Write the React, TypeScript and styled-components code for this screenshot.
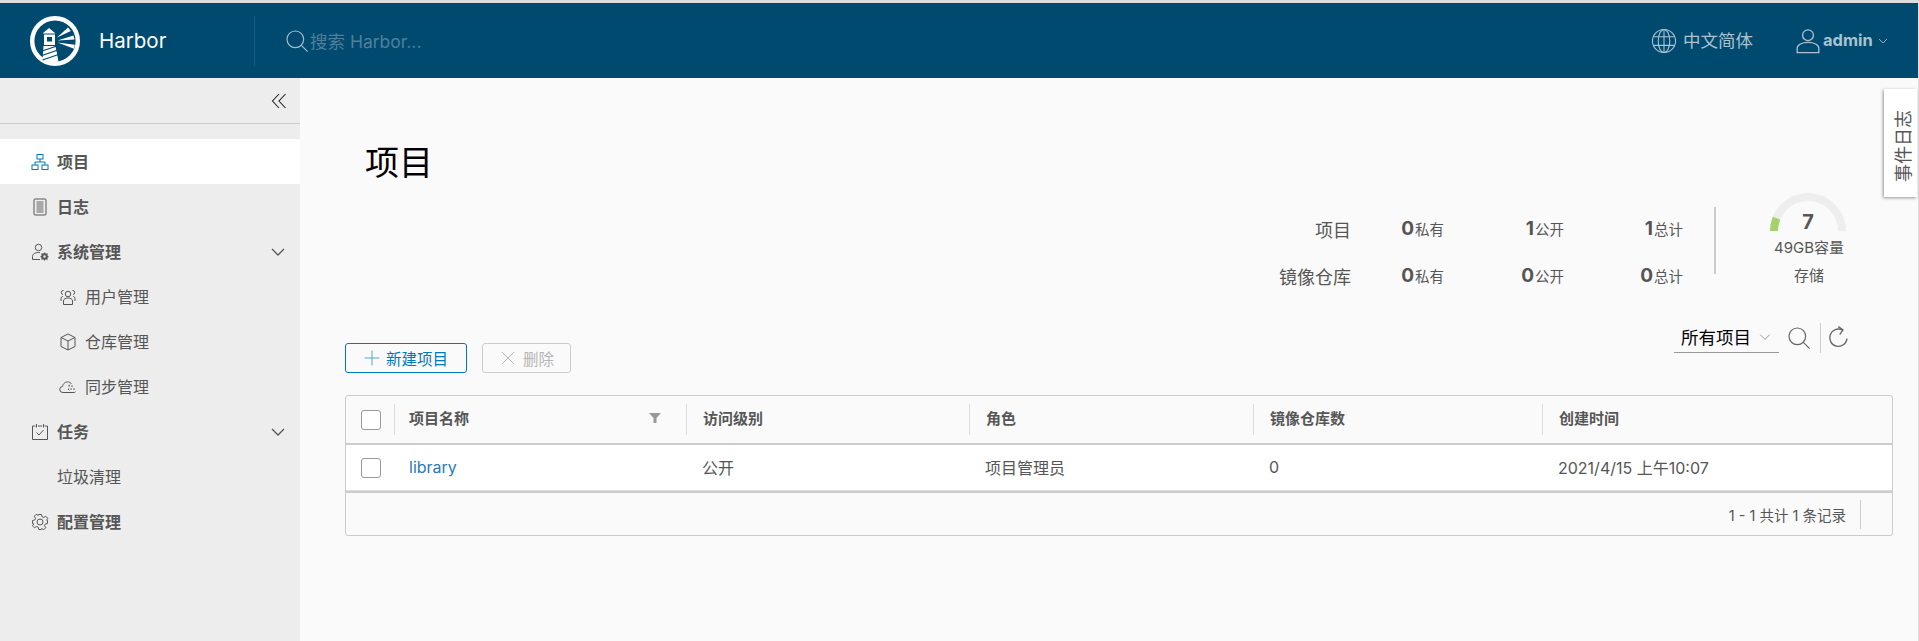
import { FC, ReactNode } from 'react';
import styled, { createGlobalStyle } from 'styled-components';

const FONT = `Inter, "Noto Sans CJK SC", sans-serif`;
const HEADER_BG = '#004a70';
const TEXT = '#565656';
const BLUE = '#0079b8';
const LINE = '#ccc';

const GlobalStyle = createGlobalStyle`
  html, body { margin: 0; padding: 0; height: 100%; overflow: hidden; }
  body { font-family: ${FONT}; color: ${TEXT}; background: #fafafa; }
  #root { height: 100%; }
  * { box-sizing: border-box; }
`;

const Page = styled.div`
  position: relative;
  height: 641px;
  display: flex;
  flex-direction: column;
  border-top: 3px solid #ddd;
  border-right: 1px solid #ddd;
`;

const Header = styled.header`
  height: 75px;
  flex: none;
  display: flex;
  align-items: center;
  background: ${HEADER_BG};
  color: #a9c3d2;
`;

const Branding = styled.div`
  width: 255px;
  height: 50px;
  padding-left: 30px;
  display: flex;
  align-items: center;
  gap: 19px;
  border-right: 1px solid #1a5c7e;
`;

const BrandName = styled.span`
  padding-bottom: 1px;
  font-size: 20.5px;
  color: #fff;
`;

const SearchBox = styled.div`
  margin-left: 30px;
  display: flex;
  align-items: center;
  gap: 1px;
  font-size: 17.5px;
  color: #4f7f9b;
`;

const SearchGlass = styled.span`
  display: flex;
  color: #9dbccd;
`;

const HeaderRight = styled.div`
  margin-left: auto;
  display: flex;
  align-items: center;
`;

const HeaderItem = styled.div<{ $width: number; $gap: number }>`
  width: ${(p) => p.$width}px;
  display: flex;
  align-items: center;
  gap: ${(p) => p.$gap}px;
  font-size: 17.5px;
`;

const HeaderLabel = styled.span`
  padding-bottom: 3px;
`;

const UserName = styled.span`
  padding-bottom: 2px;
  font-size: 16.5px;
  font-weight: 700;
`;

const UserCaret = styled.span`
  margin-left: 2px;
  display: flex;
`;

const Body = styled.div`
  flex: 1;
  display: flex;
  min-height: 0;
`;

const SideNav = styled.nav`
  width: 300px;
  flex: none;
  background: #ededed;
`;

const NavToggle = styled.div`
  height: 46px;
  margin-bottom: 15px;
  padding-right: 12px;
  display: flex;
  align-items: center;
  justify-content: flex-end;
  color: #222;
  border-bottom: 1px solid ${LINE};
`;

const NavRow = styled.div<{ $active?: boolean; $sub?: boolean; $indent?: boolean }>`
  height: 45px;
  padding-left: ${(p) => (p.$sub ? 59 : p.$indent ? 57 : 31)}px;
  padding-right: 13px;
  display: flex;
  align-items: center;
  gap: 8px;
  font-size: 16px;
  font-weight: ${(p) => (p.$sub || p.$indent ? 400 : 700)};
  background: ${(p) => (p.$active ? '#fff' : 'transparent')};
  color: ${TEXT};
`;

const NavLabel = styled.span`
  padding-bottom: 2px;
`;

const NavCaret = styled.span`
  margin-left: auto;
  display: flex;
`;

const Main = styled.main`
  flex: 1;
  min-width: 0;
  padding: 0 25px 0 45px;
  background: #fafafa;
`;

const Title = styled.h1`
  margin: 61px 0 0 20px;
  font-size: 34px;
  line-height: 48px;
  font-weight: 400;
  color: #000;
`;

const Summary = styled.section`
  margin-top: 6px;
  height: 108px;
  padding-right: 45px;
  display: flex;
  justify-content: flex-end;
  align-items: flex-start;
`;

const StatGrid = styled.div`
  margin-top: 12px;
  display: grid;
  grid-template-columns: 72px 93px 120px 119px;
  grid-auto-rows: 47px;
  align-items: center;
  justify-items: end;
`;

const StatLabel = styled.div`
  font-size: 18px;
  white-space: nowrap;
`;

const StatCell = styled.div`
  display: flex;
  align-items: center;
  gap: 1px;
  font-size: 14.5px;
`;

const StatNumber = styled.span`
  font-size: 19px;
  font-weight: 700;
  color: #555;
`;

const StatDivider = styled.div`
  width: 2px;
  height: 67px;
  margin: 14px 52px 0 31px;
  background: ${LINE};
`;

const Gauge = styled.div`
  position: relative;
  width: 80px;
  display: flex;
  flex-direction: column;
  align-items: center;
`;

const GaugeValue = styled.div`
  position: absolute;
  top: 16px;
  left: 0;
  right: 0;
  text-align: center;
  font-size: 20px;
  line-height: 26px;
  font-weight: 700;
`;

const GaugeCaption = styled.div`
  margin: 7px 0 0 2px;
  font-size: 15px;
  line-height: 20px;
  white-space: nowrap;
`;

const GaugeTitle = styled.div`
  margin: 8px 0 0 2px;
  font-size: 15px;
  line-height: 20px;
`;

const Toolbar = styled.div`
  margin-top: 22px;
  height: 50px;
  display: flex;
  justify-content: space-between;
`;

const ButtonGroup = styled.div`
  align-self: flex-end;
  display: flex;
  gap: 15px;
`;

const ActionButton = styled.button<{ $disabled?: boolean }>`
  height: 30px;
  padding: 0 ${(p) => (p.$disabled ? 16 : 18)}px 0 ${(p) => (p.$disabled ? 16 : 17)}px;
  display: flex;
  align-items: center;
  gap: ${(p) => (p.$disabled ? 6 : 5)}px;
  font-family: ${FONT};
  font-size: 15.5px;
  border-radius: 3px;
  background: transparent;
  color: ${(p) => (p.$disabled ? '#b5b5b5' : BLUE)};
  border: 1px solid ${(p) => (p.$disabled ? LINE : BLUE)};
`;

const FilterTools = styled.div`
  height: 30px;
  margin-right: 42px;
  display: flex;
  align-items: center;
  color: #666;
`;

const FilterSelect = styled.div`
  width: 105px;
  height: 29px;
  padding: 0 7px 2px 7px;
  display: flex;
  align-items: center;
  justify-content: space-between;
  font-size: 17.5px;
  color: #000;
  border-bottom: 1px solid #999;
`;

const FilterCaret = styled.span`
  display: flex;
  color: #999;
`;

const ToolDivider = styled.div`
  width: 1px;
  height: 30px;
  margin: 0 6px 0 9px;
  background: ${LINE};
`;

const SearchTool = styled.span`
  margin-left: 8px;
  display: flex;
`;

const Table = styled.section`
  margin-top: 22px;
  border: 1px solid ${LINE};
  border-radius: 3px;
  overflow: hidden;
`;

const COLUMNS = '48px 292px 283px 284px 289px 1fr';

const HeadRow = styled.div`
  height: 49px;
  display: grid;
  grid-template-columns: ${COLUMNS};
  align-items: center;
  border-bottom: 2px solid ${LINE};
  font-size: 15px;
  font-weight: 700;
`;

const HeadCell = styled.div<{ $first?: boolean }>`
  height: 31px;
  padding: 0 25px 4px ${(p) => (p.$first ? 14 : 16)}px;
  display: flex;
  align-items: center;
  justify-content: space-between;
  border-left: 1px solid #ddd;
`;

const BodyRow = styled.div`
  height: 46px;
  display: grid;
  grid-template-columns: ${COLUMNS};
  align-items: center;
  background: #fff;
  border-bottom: 1px solid #ddd;
  font-size: 16px;
`;

const BodyCell = styled.div<{ $first?: boolean }>`
  padding: 0 0 2px ${(p) => (p.$first ? 15 : 16)}px;
`;

const CheckCell = styled.div`
  padding-left: 15px;
`;

const CheckBox = styled.div`
  width: 20px;
  height: 20px;
  border: 1px solid #999;
  border-radius: 3px;
  background: #fff;
`;

const ProjectLink = styled.a`
  color: #2a7ab8;
`;

const TableFooter = styled.div`
  height: 44px;
  padding-right: 31px;
  display: flex;
  align-items: center;
  justify-content: flex-end;
  font-size: 14.5px;
  border-top: 2px solid ${LINE};
`;

const FooterDivider = styled.div`
  width: 1px;
  height: 29px;
  margin-left: 14px;
  background: ${LINE};
`;

const EventTab = styled.div`
  position: absolute;
  top: 86px;
  right: 1px;
  width: 33px;
  height: 108px;
  padding: 5px 0 0 3px;
  display: flex;
  align-items: center;
  justify-content: center;
  background: #fff;
  box-shadow: -1px 1px 3px rgba(0, 0, 0, 0.4);
`;

const EventTabText = styled.span`
  writing-mode: vertical-rl;
  text-orientation: sideways;
  transform: rotate(180deg);
  font-size: 18px;
`;

const Svg: FC<{ size?: number; children: ReactNode; color?: string; width?: number }> = ({
  size = 18,
  children,
  color = 'currentColor',
  width = 2,
}) => (
  <svg
    width={size}
    height={size}
    viewBox="0 0 36 36"
    fill="none"
    stroke={color}
    strokeWidth={width}
    style={{ flex: 'none', display: 'block' }}
  >
    {children}
  </svg>
);

const Logo = () => (
  <svg width="50" height="50" viewBox="0 0 50 50" style={{ flex: 'none' }}>
    <circle cx="25" cy="25" r="22.8" fill="none" stroke="#fff" strokeWidth="4.4" />
    <path d="M12.5 17.5 19 12l6.500 5.500z" fill="#fff" />
    <path fillRule="evenodd" d="M14 18.500h11V29H14zM17 21v4.500h5V21z" fill="#fff" />
    <path d="M13.500 30h12l3 15.500-7 1-9-1.500z" fill="#fff" />
    <path d="M12 35l15-5M12 39.500l16-5.500M12.500 44l16-5.500" stroke={HEADER_BG} strokeWidth="1.300" />
    <path d="M27 21.500 38 11.500l2.800 3.600zM27.500 24.500 43.500 19.500l1 4zM27.500 26.500l17.300 2.300-.8 3.900z" fill="#fff" />
  </svg>
);

const SearchIcon: FC<{ size?: number }> = ({ size = 24 }) => (
  <Svg size={size} width={1.800}>
    <circle cx="15.500" cy="15.500" r="12.500" />
    <path d="M24.500 24.500 34 34" />
  </Svg>
);

const Chevron: FC<{ size?: number; width?: number }> = ({ size = 18, width = 2.500 }) => (
  <Svg size={size} width={width}>
    <path d="M6 12l12 12 12-12" />
  </Svg>
);

const projectIcon = (
  <Svg color={BLUE}>
    <rect x="12" y="3" width="12" height="9" />
    <rect x="2" y="24" width="12" height="9" />
    <rect x="22" y="24" width="12" height="9" />
    <path d="M18 12v6M8 24v-6h20v6" />
  </Svg>
);

const logIcon = (
  <Svg>
    <rect x="6" y="2" width="24" height="32" rx="2" />
    <path d="M11 8h14M11 12h14M11 16h14M11 20h14M11 24h14M11 28h14" strokeWidth="1.800" />
  </Svg>
);

const adminIcon = (
  <Svg>
    <circle cx="15" cy="9" r="6.500" />
    <path d="M3 33v-6c0-5 5-8 12-8 1 0 2 0 3 .2M3 33h15" />
    <circle cx="27" cy="27" r="4.500" strokeWidth="4" />
    <path d="M27 19v3M27 32v3M19 27h3M32 27h3M21 21l2 2M31 31l2 2M21 33l2-2M31 23l2-2" strokeWidth="2.500" />
  </Svg>
);

const usersIcon = (
  <Svg>
    <circle cx="18" cy="12" r="5.500" />
    <path d="M9 33v-7c0-4 4-6 9-6s9 2 9 6v7z" />
    <path d="M9 5a4 4 0 0 0-1 8M27 5a4 4 0 0 1 1 8M4 26v-5c0-3 2-4 4-4M32 26v-5c0-3-2-4-4-4" />
  </Svg>
);

const boxIcon = (
  <Svg>
    <path d="M18 2 32 9v18l-14 7-14-7V9z" />
    <path d="M4 9l14 7 14-7M18 16v18" />
  </Svg>
);

const cloudIcon = (
  <Svg>
    <path d="M30 29H8a6 6 0 0 1-1-12c1-6 6-10 12-9 3 .5 5 2 6 4" />
    <path d="M30 29c1 0 2-.5 3-1.500" />
    <path d="M28 16H19M19 16l3-3M32 22H18M18 22l3 3" strokeWidth="1.800" strokeDasharray="4 2" />
  </Svg>
);

const taskIcon = (
  <Svg>
    <path d="M9 6H3v27h30V6h-6M14 6h8" />
    <path d="M11 2v7M25 2v7" />
    <path d="M11 19l5 5 9-10" />
  </Svg>
);

const gearIcon = (
  <Svg>
    <circle cx="18" cy="18" r="6" />
    <path d="M15 3h6l1 4.500 3.500 1.500 4-2.500 4 4-2.500 4L32.500 15l.5 0 0 6-4.500 1-1.500 3.500 2.500 4-4 4-4-2.500L21 32.500 20.500 33h-5l-1-4.500-3.500-1.500-4 2.500-4-4 2.500-4L3.500 21H3v-6l4.500-1L9 10.500l-2.500-4 4-4 4 2.500z" />
  </Svg>
);

const NAV_ITEMS: {
  label: string;
  icon?: ReactNode;
  active?: boolean;
  sub?: boolean;
  indent?: boolean;
  caret?: boolean;
}[] = [
  { label: '项目', icon: projectIcon, active: true },
  { label: '日志', icon: logIcon },
  { label: '系统管理', icon: adminIcon, caret: true },
  { label: '用户管理', icon: usersIcon, sub: true },
  { label: '仓库管理', icon: boxIcon, sub: true },
  { label: '同步管理', icon: cloudIcon, sub: true },
  { label: '任务', icon: taskIcon, caret: true },
  { label: '垃圾清理', indent: true },
  { label: '配置管理', icon: gearIcon },
];

const STATS = [
  { label: '项目', values: [0, 1, 1] },
  { label: '镜像仓库', values: [0, 0, 0] },
];
const STAT_NAMES = ['私有', '公开', '总计'];
const HEADINGS = ['项目名称', '访问级别', '角色', '镜像仓库数', '创建时间'];

const App: FC = () => (
  <Page>
    <GlobalStyle />
    <Header>
      <Branding>
        <Logo />
        <BrandName>Harbor</BrandName>
      </Branding>
      <SearchBox>
        <SearchGlass>
          <SearchIcon />
        </SearchGlass>
        搜索 Harbor...
      </SearchBox>
      <HeaderRight>
        <HeaderItem $width={144} $gap={6}>
          <Svg size={26} width={1.500}>
            <circle cx="18" cy="18" r="16" />
            <ellipse cx="18" cy="18" rx="8" ry="16" />
            <path d="M18 2v32M3 12h30M3 24h30" />
          </Svg>
          <HeaderLabel>中文简体</HeaderLabel>
        </HeaderItem>
        <HeaderItem $width={123} $gap={2}>
          <Svg size={26} width={1.800}>
            <circle cx="18" cy="10" r="7.500" />
            <path d="M3 34v-6c0-5 7-8 15-8s15 3 15 8v6z" />
          </Svg>
          <UserName>admin</UserName>
          <UserCaret>
            <Chevron size={12} />
          </UserCaret>
        </HeaderItem>
      </HeaderRight>
    </Header>
    <Body>
      <SideNav>
        <NavToggle>
          <Svg size={18} width={2.200}>
            <path d="M18 4 5 18l13 14M31 4 18 18l13 14" />
          </Svg>
        </NavToggle>
        {NAV_ITEMS.map((item) => (
          <NavRow key={item.label} $active={item.active} $sub={item.sub} $indent={item.indent}>
            {item.icon}
            <NavLabel>{item.label}</NavLabel>
            {item.caret && (
              <NavCaret>
                <Chevron />
              </NavCaret>
            )}
          </NavRow>
        ))}
      </SideNav>
      <Main>
        <Title>项目</Title>
        <Summary>
          <StatGrid>
            {STATS.map((row) => [
              <StatLabel key={row.label}>{row.label}</StatLabel>,
              ...row.values.map((value, i) => (
                <StatCell key={`${row.label}-${STAT_NAMES[i]}`}>
                  <StatNumber>{value}</StatNumber>
                  {STAT_NAMES[i]}
                </StatCell>
              )),
            ])}
          </StatGrid>
          <StatDivider />
          <Gauge>
            <svg width="76" height="38" viewBox="0 0 76 38">
              <path d="M4 38a34 34 0 0 1 68 0" fill="none" stroke="#eee" strokeWidth="8" />
              <path d="M4 38a34 34 0 0 1 2.500-12.800" fill="none" stroke="#a0d468" strokeWidth="8" />
            </svg>
            <GaugeValue>7</GaugeValue>
            <GaugeCaption>49GB容量</GaugeCaption>
            <GaugeTitle>存储</GaugeTitle>
          </Gauge>
        </Summary>
        <Toolbar>
          <ButtonGroup>
            <ActionButton>
              <Svg size={18} color="#5aa5cf" width={2}>
                <path d="M18 3v30M3 18h30" />
              </Svg>
              新建项目
            </ActionButton>
            <ActionButton $disabled>
              <Svg size={18} width={2}>
                <path d="M6 6l24 24M30 6 6 30" />
              </Svg>
              删除
            </ActionButton>
          </ButtonGroup>
          <FilterTools>
            <FilterSelect>
              所有项目
              <FilterCaret>
                <Chevron size={14} width={2.500} />
              </FilterCaret>
            </FilterSelect>
            <SearchTool>
              <SearchIcon />
            </SearchTool>
            <ToolDivider />
            <Svg size={24} width={2}>
              <path d="M30 19a13 13 0 1 1-7-13" />
              <path d="M17 1l7 5-5 7" />
            </Svg>
          </FilterTools>
        </Toolbar>
        <Table>
          <HeadRow>
            <CheckCell>
              <CheckBox />
            </CheckCell>
            {HEADINGS.map((heading, i) => (
              <HeadCell key={heading} $first={i === 0}>
                {heading}
                {i === 0 && (
                  <svg width="12" height="10" viewBox="0 0 12 10">
                    <path d="M0 0h12L7.500 5v5h-3V5z" fill="#999" />
                  </svg>
                )}
              </HeadCell>
            ))}
          </HeadRow>
          <BodyRow>
            <CheckCell>
              <CheckBox />
            </CheckCell>
            <BodyCell $first>
              <ProjectLink>library</ProjectLink>
            </BodyCell>
            <BodyCell>公开</BodyCell>
            <BodyCell>项目管理员</BodyCell>
            <BodyCell>0</BodyCell>
            <BodyCell>2021/4/15 上午10:07</BodyCell>
          </BodyRow>
          <TableFooter>
            1 - 1 共计 1 条记录
            <FooterDivider />
          </TableFooter>
        </Table>
      </Main>
    </Body>
    <EventTab>
      <EventTabText>事件日志</EventTabText>
    </EventTab>
  </Page>
);

export default App;
